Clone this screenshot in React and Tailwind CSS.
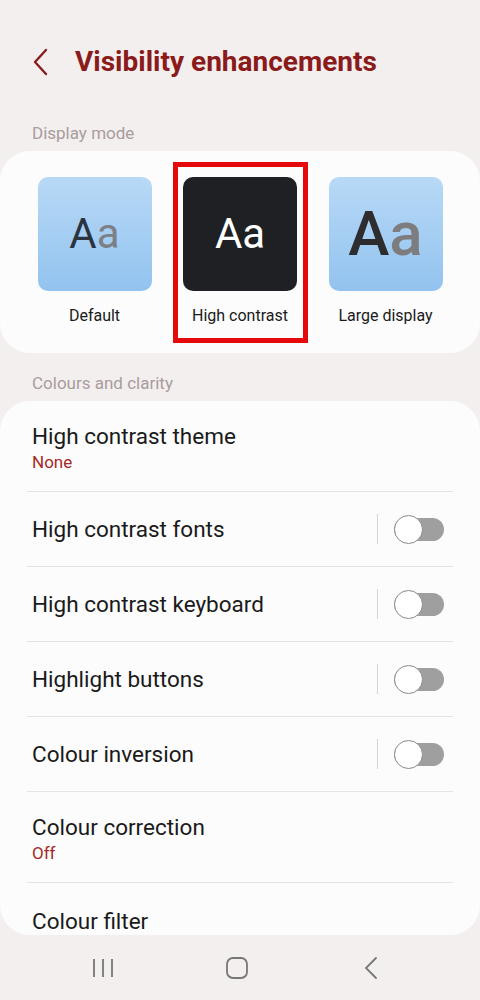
import React from "react";

const Toggle = () => (
  <div className="flex items-center">
    <div className="h-[30px] w-px bg-[#d9d4d4]" />
    <div className="relative ml-[16px] h-[23px] w-[50px] rounded-full bg-[#9f9f9f]">
      <div className="absolute left-0 top-[-3px] h-[29px] w-[29px] rounded-full border-[1.5px] border-[#8a8a8a] bg-white" />
    </div>
  </div>
);

const Row = ({ title, sub, toggle, last }) => (
  <div className="px-[27px]">
    <div
      className={`flex items-center justify-between pl-[5px] pr-[9px] ${sub ? "h-[91px] pt-[3px]" : "h-[75px]"} ${last ? "" : "border-b border-[#e8e4e4]"}`}
    >
      <div className="flex flex-col">
        <span className="text-[22.5px] leading-[28px] text-[#1a1a1a]">{title}</span>
        {sub && <span className="text-[17px] leading-[24px] text-[#a42a26]">{sub}</span>}
      </div>
      {toggle && <Toggle />}
    </div>
  </div>
);

const Tile = ({ label, children, selected }) => (
  <div
    className={`flex flex-col items-center ${selected ? "border-[5px] border-[#e5090b] px-[5.5px] pt-[10px] pb-[10px]" : "pt-[15px] pb-[15px]"}`}
  >
    {children}
    <span className="mt-[13px] text-[16px] leading-[24px] text-[#1a1a1a]">{label}</span>
  </div>
);

export default function App() {
  return (
    <div className="flex h-[1000px] w-[480px] flex-col bg-[#f3efef] font-['Roboto',sans-serif]">
      <div className="flex h-[122px] items-center gap-[26px] pl-[33px] pt-[2px]">
        <svg width="16" height="28" viewBox="0 0 16 28" fill="none">
          <path d="M13 2 L2 14 L13 26" stroke="#8b1d1d" strokeWidth="2.4" strokeLinecap="round" strokeLinejoin="round" />
        </svg>
        <h1 className="text-[28px] font-bold text-[#8b1a1a]">Visibility enhancements</h1>
      </div>

      <div className="px-[32px] text-[17px] leading-[22px] text-[#a99c9c]">Display mode</div>

      <div className="mt-[7px] flex h-[202px] items-center justify-center gap-[21px] rounded-[30px] bg-[#fcfcfc]">
        <Tile label="Default">
          <div className="flex h-[114px] w-[114px] items-center justify-center rounded-[10px] bg-gradient-to-b from-[#b8d9f6] to-[#92c3ef]">
            <span className="text-[42px] text-[#2a3340]">A</span>
            <span className="text-[42px] text-[#7c7f86]">a</span>
          </div>
        </Tile>
        <Tile label="High contrast" selected>
          <div className="flex h-[114px] w-[114px] items-center justify-center rounded-[10px] bg-[#1e2024]">
            <span className="text-[42px] text-white">Aa</span>
          </div>
        </Tile>
        <Tile label="Large display">
          <div className="flex h-[114px] w-[114px] items-center justify-center rounded-[10px] bg-gradient-to-b from-[#b8d9f6] to-[#92c3ef]">
            <span className="text-[62px] font-medium text-[#2d2d2f]">A</span>
            <span className="text-[62px] font-medium text-[#7d7d80]">a</span>
          </div>
        </Tile>
      </div>

      <div className="mt-[19px] px-[32px] text-[17px] leading-[22px] text-[#a99c9c]">Colours and clarity</div>

      <div className="mt-[7px] flex h-[534px] flex-col overflow-hidden rounded-[30px] bg-[#fcfcfc]">
        <Row title="High contrast theme" sub="None" />
        <Row title="High contrast fonts" toggle />
        <Row title="High contrast keyboard" toggle />
        <Row title="Highlight buttons" toggle />
        <Row title="Colour inversion" toggle />
        <Row title="Colour correction" sub="Off" />
        <Row title="Colour filter" last />
      </div>

      <div className="flex flex-1 items-center gap-[94px] pl-[83px]">
        <div className="flex w-[40px] justify-center">
          <svg width="22" height="20" viewBox="0 0 22 20">
            <path d="M2 1v18M11 1v18M20 1v18" stroke="#777" strokeWidth="1.8" />
          </svg>
        </div>
        <div className="flex w-[40px] justify-center">
          <svg width="22" height="22" viewBox="0 0 22 22">
            <rect x="1" y="1" width="20" height="20" rx="6" fill="none" stroke="#777" strokeWidth="1.8" />
          </svg>
        </div>
        <div className="flex w-[40px] justify-center">
          <svg width="14" height="24" viewBox="0 0 14 24">
            <path d="M12 2 L2 12 L12 22" fill="none" stroke="#777" strokeWidth="1.8" strokeLinecap="round" />
          </svg>
        </div>
      </div>
    </div>
  );
}
